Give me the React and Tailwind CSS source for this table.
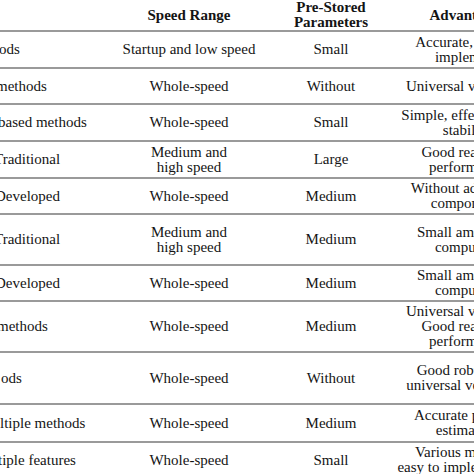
import React from "react";

const rows = [
  { h: "h-[37px]", c1: "ods", m1: "ml-[-1px]", c2: ["Startup and low speed"], c3: "Small", c4: ["Accurate, easy to", "implement"] },
  { h: "h-[36px]", c1: "methods", m1: "ml-[-4px]", c2: ["Whole-speed"], c3: "Without", c4: ["Universal versatility"] },
  { h: "h-[37px]", c1: "based methods", m1: "ml-[-2px]", c2: ["Whole-speed"], c3: "Small", c4: ["Simple, effective, and", "stability"] },
  { h: "h-[37px]", c1: "Traditional", m1: "ml-[-6px]", c2: ["Medium and", "high speed"], c3: "Large", c4: ["Good real-time", "performance"] },
  { h: "h-[36px]", c1: "Developed", m1: "ml-[-5px]", c2: ["Whole-speed"], c3: "Medium", c4: ["Without additional", "components"] },
  { h: "h-[51px]", c1: "Traditional", m1: "ml-[-6px]", c2: ["Medium and", "high speed"], c3: "Medium", c4: ["Small amount of", "computing"] },
  { h: "h-[36px]", c1: "Developed", m1: "ml-[-5px]", c2: ["Whole-speed"], c3: "Medium", c4: ["Small amount of", "computing"] },
  { h: "h-[51px]", c1: "methods", m1: "ml-[-3px]", c2: ["Whole-speed"], c3: "Medium", c4: ["Universal versatility", "Good real-time", "performance"] },
  { h: "h-[52px]", c1: "ods", m1: "ml-[1px]", c2: ["Whole-speed"], c3: "Without", c4: ["Good robustness", "universal versatility,"] },
  { h: "h-[38px]", c1: "ltiple methods", m1: "ml-[0px]", c2: ["Whole-speed"], c3: "Medium", c4: ["Accurate position", "estimation"] },
  { h: "h-[36px]", c1: "tiple features", m1: "ml-[-2px]", c2: ["Whole-speed"], c3: "Small", c4: ["Various methods,", "easy to implement, and"] },
];

function Lines({ items }) {
  return (
    <div className="flex flex-col items-center">
      {items.map((t, i) => (
        <span key={i} className="whitespace-nowrap">{t}</span>
      ))}
    </div>
  );
}

export default function App() {
  return (
    <div
      className="w-[474px] h-[474px] overflow-hidden bg-white text-[#141414] text-[15px] leading-[15px]"
      style={{ fontFamily: '"Liberation Serif", "Times New Roman", serif' }}
    >
      <div className="w-[532px]">
        <div className="grid grid-cols-[118px_142px_142px_130px] h-[32px] pb-[4px] border-b-2 border-[#9a9a9a] font-bold items-center">
          <div></div>
          <div className="flex justify-center"><span className="whitespace-nowrap">Speed Range</span></div>
          <Lines items={["Pre-Stored", "Parameters"]} />
          <div className="flex justify-center"><span className="whitespace-nowrap">Advantages</span></div>
        </div>
        {rows.map((r, i) => (
          <div
            key={i}
            className={`grid grid-cols-[118px_142px_142px_130px] ${r.h} border-b-2 border-[#9a9a9a] items-center`}
          >
            <div>
              <span className={`block whitespace-nowrap ${r.m1}`}>{r.c1}</span>
            </div>
            <Lines items={r.c2} />
            <div className="flex justify-center"><span>{r.c3}</span></div>
            <Lines items={r.c4} />
          </div>
        ))}
      </div>
    </div>
  );
}
